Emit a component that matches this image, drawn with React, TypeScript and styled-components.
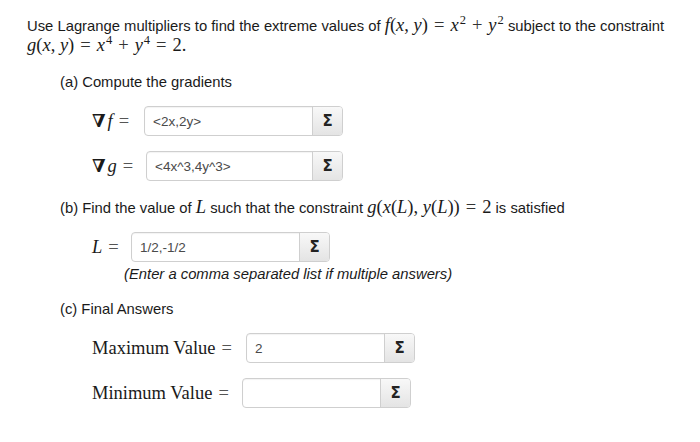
import React from 'react';
import styled, { createGlobalStyle } from 'styled-components';

const GlobalStyle = createGlobalStyle`
  html, body {
    margin: 0;
    padding: 0;
    background: #ffffff;
  }
  body {
    font-family: "Liberation Sans", Arial, sans-serif;
    color: #1a1a1a;
  }
`;

const Page = styled.div`
  width: 700px;
  height: 442px;
  padding: 16px 0 0 27px;
  box-sizing: border-box;
  font-size: 14.8px;
`;

const Intro = styled.p`
  margin: 0;
  line-height: 20px;
`;

const M = styled.span<{ $upright?: boolean }>`
  font-family: "Liberation Serif", "Times New Roman", serif;
  font-style: ${(p) => (p.$upright ? 'normal' : 'italic')};
  font-size: 18.5px;
  line-height: 1;
`;

const Op = styled.span`
  font-family: "Liberation Serif", "Times New Roman", serif;
  font-size: 18.5px;
  line-height: 1;
  color: #333;
  margin: 0 6px;
`;

const Sup = styled.sup`
  font-family: "Liberation Serif", "Times New Roman", serif;
  font-size: 12.5px;
  font-style: normal;
  vertical-align: 7px;
  line-height: 0;
  margin-left: 1px;
`;

const Section = styled.div<{ $top: number }>`
  margin-left: 33px;
  margin-top: ${(p) => p.$top}px;
`;

const Heading = styled.div`
  line-height: 20px;
`;

const Row = styled.div<{ $top: number }>`
  display: flex;
  align-items: center;
  margin-top: ${(p) => p.$top}px;
  margin-left: 32px;
`;

const Label = styled.span<{ $width: number }>`
  width: ${(p) => p.$width}px;
  flex-shrink: 0;
  font-family: "Liberation Serif", "Times New Roman", serif;
  font-size: 18.5px;
  line-height: 20px;
  white-space: nowrap;
`;

const Nabla = styled.span`
  font-family: "DejaVu Serif", serif;
  font-weight: bold;
  font-size: 18px;
  line-height: 1;
  margin-right: 2px;
`;

const Eq = styled.span`
  color: #555;
  margin-left: 6px;
`;

const Field = styled.div<{ $width: number }>`
  display: flex;
  width: ${(p) => p.$width}px;
  height: 30px;
  box-sizing: border-box;
  border: 1px solid #cfcfcf;
  border-radius: 4px;
  background: #fff;
  box-shadow: inset 0 1px 1px rgba(0, 0, 0, 0.05);
  overflow: hidden;
`;

const Value = styled.div`
  flex: 1;
  display: flex;
  align-items: center;
  padding-left: 8px;
  font-size: 13.5px;
  color: #4a4a4a;
`;

const SigmaButton = styled.div`
  width: 29px;
  display: flex;
  align-items: center;
  justify-content: center;
  border-left: 1px solid #cfcfcf;
  background: linear-gradient(#f8f8f8, #e4e4e4);
  font-family: "DejaVu Sans", sans-serif;
  font-weight: bold;
  font-size: 15px;
  color: #222;
`;

const Note = styled.div`
  margin: 3px 0 0 64px;
  font-style: italic;
  line-height: 18px;
`;

function Answer({ value, width }: { value: string; width: number }) {
  return (
    <Field $width={width}>
      <Value>{value}</Value>
      <SigmaButton>Σ</SigmaButton>
    </Field>
  );
}

function App() {
  return (
    <Page>
      <GlobalStyle />
      <Intro>
        Use Lagrange multipliers to find the extreme values of{' '}
        <M>f</M>
        <M $upright>(</M>
        <M>x</M>
        <M $upright>, </M>
        <M>y</M>
        <M $upright>)</M>
        <Op>=</Op>
        <M>x</M>
        <Sup>2</Sup>
        <Op>+</Op>
        <M>y</M>
        <Sup>2</Sup> subject to the constraint
        <br />
        <M>g</M>
        <M $upright>(</M>
        <M>x</M>
        <M $upright>, </M>
        <M>y</M>
        <M $upright>)</M>
        <Op>=</Op>
        <M>x</M>
        <Sup>4</Sup>
        <Op>+</Op>
        <M>y</M>
        <Sup>4</Sup>
        <Op>=</Op>
        <M $upright>2.</M>
      </Intro>

      <Section $top={16}>
        <Heading>(a) Compute the gradients</Heading>
        <Row $top={14}>
          <Label $width={52}>
            <Nabla>∇</Nabla>
            <M>f</M>
            <Eq>=</Eq>
          </Label>
          <Answer value="<2x,2y>" width={199} />
        </Row>
        <Row $top={15}>
          <Label $width={54}>
            <Nabla>∇</Nabla>
            <M>g</M>
            <Eq>=</Eq>
          </Label>
          <Answer value="<4x^3,4y^3>" width={197} />
        </Row>
      </Section>

      <Section $top={17}>
        <Heading>
          (b) Find the value of <M>L</M> such that the constraint <M>g</M>
          <M $upright>(</M>
          <M>x</M>
          <M $upright>(</M>
          <M>L</M>
          <M $upright>), </M>
          <M>y</M>
          <M $upright>(</M>
          <M>L</M>
          <M $upright>))</M>
          <Op>=</Op>
          <M $upright>2</M> is satisfied
        </Heading>
        <Row $top={14}>
          <Label $width={39}>
            <M>L</M>
            <Eq>=</Eq>
          </Label>
          <Answer value="1/2,-1/2" width={199} />
        </Row>
        <Note>(Enter a comma separated list if multiple answers)</Note>
      </Section>

      <Section $top={16}>
        <Heading>(c) Final Answers</Heading>
        <Row $top={14}>
          <Label $width={154}>
            Maximum Value<Eq>=</Eq>
          </Label>
          <Answer value="2" width={169} />
        </Row>
        <Row $top={15}>
          <Label $width={150}>
            Minimum Value<Eq>=</Eq>
          </Label>
          <Answer value="" width={169} />
        </Row>
      </Section>
    </Page>
  );
}

export default App;
